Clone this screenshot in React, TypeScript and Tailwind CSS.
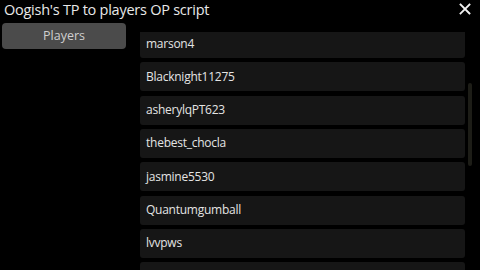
import React from 'react';

const players = [
  'marson4',
  'Blacknight11275',
  'asherylqPT623',
  'thebest_chocla',
  'jasmine5530',
  'Quantumgumball',
  'lvvpws',
  '',
];

export default function App() {
  return (
    <div
      className="w-[480px] h-[270px] bg-black overflow-hidden relative text-[#e6e6e6]"
      style={{ fontFamily: '"Open Sans", "Noto Sans", sans-serif' }}
    >
      <div className="h-[20px] flex items-center pl-[4px] text-[14.5px] tracking-[-0.25px] text-[#e8e8e8]">
        Oogish's TP to players OP script
      </div>
      <button className="absolute top-[3px] right-[9px] w-[12px] h-[12px] text-white">
        <svg viewBox="0 0 12 12" width="12" height="12">
          <path d="M1.5 1.5 L10.5 10.5 M10.5 1.5 L1.5 10.5" stroke="#f2f2f2" strokeWidth="1.8" strokeLinecap="square" />
        </svg>
      </button>
      <div className="flex">
        <div className="w-[140px] pl-[2px] pt-[3px]">
          <div className="w-[124px] h-[26px] rounded-[4px] bg-[#4b4b4b] flex items-center justify-center text-[12.5px] text-[#cfcfcf]">
            Players
          </div>
        </div>
        <div className="relative flex-1 h-[238px] mt-[12px] overflow-hidden">
          <div className="flex flex-col gap-[4.33px] -mt-[3px] w-[325px]">
            {players.map((p, i) => (
              <div
                key={i}
                className="h-[29px] shrink-0 rounded-[3px] bg-[#161616] flex items-center pl-[6px] text-[12px] tracking-[-0.25px] text-[#e4e4e4]"
              >
                {p}
              </div>
            ))}
          </div>
          <div className="absolute left-[328px] top-[51px] w-[4px] h-[83px] rounded-full bg-[#1d1d17]" />
        </div>
      </div>
    </div>
  );
}
